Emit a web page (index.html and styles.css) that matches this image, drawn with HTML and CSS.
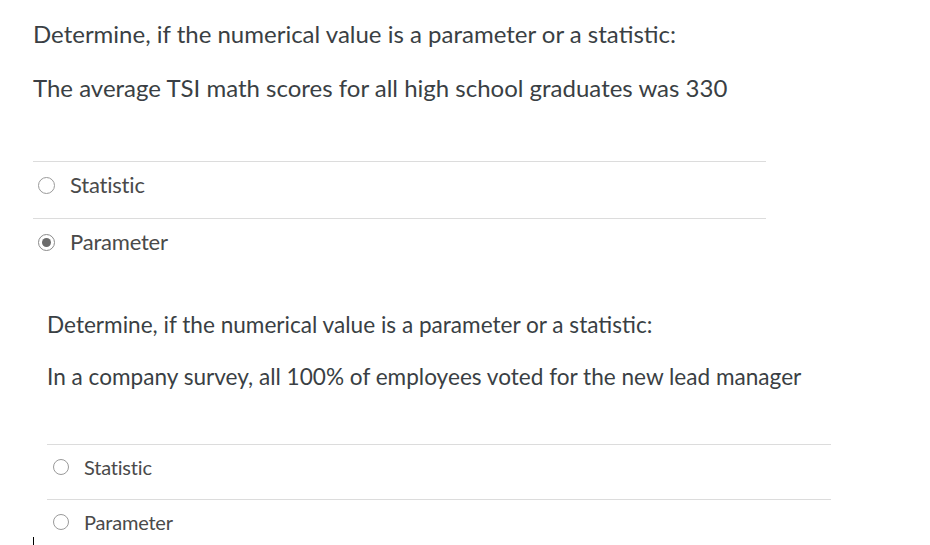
FILE: index.html
```html
<!DOCTYPE html>
<html>
<head>
<meta charset="utf-8">
<link rel="stylesheet" href="styles.css">
</head>
<body>
<div class="page">
  <section class="question q1">
    <p class="prompt first">Determine, if the numerical value is a parameter or a statistic:</p>
    <p class="prompt second">The average TSI math scores for all high school graduates was 330</p>
    <div class="answers">
      <label class="answer"><span class="radio"></span><span class="label">Statistic</span></label>
      <label class="answer"><span class="radio checked"></span><span class="label">Parameter</span></label>
    </div>
  </section>
  <section class="question q2">
    <p class="prompt first">Determine, if the numerical value is a parameter or a statistic:</p>
    <p class="prompt second">In a company survey, all 100% of employees voted for the new lead manager</p>
    <div class="answers">
      <label class="answer"><span class="radio"></span><span class="label">Statistic</span></label>
      <label class="answer"><span class="radio"></span><span class="label">Parameter</span></label>
    </div>
  </section>
  <span class="cursor"></span>
</div>
</body>
</html>
```
FILE: styles.css
```css
html, body {
  margin: 0;
  padding: 0;
  background: #ffffff;
}
body {
  font-family: Lato, "Liberation Sans", sans-serif;
  color: #3a3f44;
  width: 930px;
  height: 545px;
  overflow: hidden;
}
.page {
  position: relative;
  height: 545px;
}
.question {
  display: flex;
  flex-direction: column;
}
.prompt {
  margin: 0;
  white-space: nowrap;
}
.answers {
  display: flex;
  flex-direction: column;
}
.answer {
  display: flex;
  align-items: flex-start;
  box-sizing: border-box;
  border-top: 1px solid #dcdcdc;
  color: #4a4a4a;
}
.label {
  letter-spacing: -0.2px;
}
.radio {
  box-sizing: border-box;
  border-radius: 50%;
  border: 1.5px solid #9a9a9a;
  background: #fff;
  flex: none;
  display: flex;
  align-items: center;
  justify-content: center;
}
.radio.checked {
  border-color: #8a8a8a;
}
.radio.checked::after {
  content: "";
  width: 9px;
  height: 9px;
  border-radius: 50%;
  background: #6b6b6b;
}

/* first question */
.q1 {
  padding-left: 33px;
  width: 733px;
}
.q1 .prompt {
  font-size: 24px;
  line-height: 28px;
}
.q1 .first { margin-top: 20px; }
.q1 .second { margin-top: 26px; }
.q1 .answers { margin-top: 59px; }
.q1 .answer {
  height: 57px;
  padding-top: 10px;
  font-size: 22px;
  line-height: 26px;
}
.q1 .radio {
  width: 17px;
  height: 17px;
  margin: 5px 15px 0 5px;
}

/* second question */
.q2 {
  padding-left: 47px;
  width: 784px;
  margin-top: 37px;
}
.q2 .prompt {
  font-size: 22.6px;
  line-height: 26px;
}
.q2 .second { margin-top: 26px; }
.q2 .answers { margin-top: 54px; }
.q2 .answer {
  height: 55px;
  padding-top: 10px;
  font-size: 20px;
  line-height: 24px;
}
.q2 .radio {
  width: 16px;
  height: 16px;
  margin: 4px 15px 0 6px;
}

.cursor {
  position: absolute;
  left: 33px;
  top: 537px;
  width: 1px;
  height: 8px;
  background: #000;
}
```
